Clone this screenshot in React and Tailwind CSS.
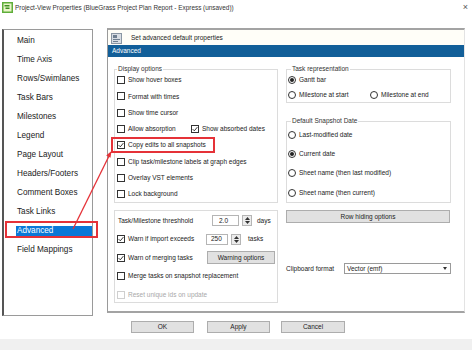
import React from 'react';

const Check = ({ on, off }) => (
  <span
    className={`w-[8px] h-[8px] border ${off ? 'border-[#cfcfcf]' : 'border-[#333]'} bg-white flex items-center justify-center shrink-0`}
  >
    {on && (
      <svg width="6" height="6" viewBox="0 0 6 6">
        <path d="M0.6 3.1 L2.3 4.8 L5.4 1.1" stroke="#222" strokeWidth="0.9" fill="none" />
      </svg>
    )}
  </span>
);

const Radio = ({ on }) => (
  <span className="w-[8px] h-[8px] rounded-full border border-[#333] bg-white flex items-center justify-center shrink-0">
    {on && <span className="w-[4px] h-[4px] rounded-full bg-[#222]" />}
  </span>
);

const Spinner = () => (
  <span className="w-[10px] h-[11px] border border-[#b5b5b5] bg-[#ececec] flex flex-col items-center justify-center gap-[1px] shrink-0">
    <svg width="5" height="3" viewBox="0 0 5 3"><path d="M0 3 L2.5 0 L5 3 Z" fill="#333" /></svg>
    <svg width="5" height="3" viewBox="0 0 5 3"><path d="M0 0 L2.5 3 L5 0 Z" fill="#333" /></svg>
  </span>
);

const CheckRow = ({ label, on, off, h = 'h-[16.3px]' }) => (
  <div className={`${h} flex items-center gap-[3px] pl-[2px]`}>
    <Check on={on} off={off} />
    <span className={off ? 'text-[#a8a8a8]' : ''}>{label}</span>
  </div>
);

const Button = ({ children, className = '' }) => (
  <div className={`h-[12px] border border-[#adadad] bg-[#e1e1e1] flex items-center justify-center text-[6.5px] ${className}`}>
    {children}
  </div>
);

const navItems = [
  'Main', 'Time Axis', 'Rows/Swimlanes', 'Task Bars', 'Milestones', 'Legend', 'Page Layout',
  'Headers/Footers', 'Comment Boxes', 'Task Links', 'Advanced', 'Field Mappings',
];

export default function App() {
  return (
    <div className="relative w-[474px] h-[351px] bg-white overflow-hidden text-[#222] font-['Liberation_Sans',Arial,sans-serif]">
      {/* title bar */}
      <div className="h-[14px] flex items-center pl-[2px] pr-[6px] pt-[1px]">
        <svg width="11" height="11" viewBox="0 0 11 11" className="shrink-0">
          <rect x="0" y="0" width="11" height="11" fill="#5fae3a" />
          <rect x="1.5" y="1.5" width="8" height="8" fill="#e9f5c8" />
          <rect x="2.5" y="3" width="5" height="1.5" fill="#3f8f22" />
          <rect x="3.5" y="5.5" width="4" height="1.5" fill="#3f8f22" />
        </svg>
        <span className="ml-[2px] text-[6.4px] text-[#333] whitespace-nowrap">
          Project-View Properties (BlueGrass Project Plan Report - Express (unsaved))
        </span>
        <span className="ml-auto text-[9px] text-[#555] leading-none">×</span>
      </div>

      {/* body */}
      <div className="flex items-start mt-[14px]">
        {/* nav list */}
        <div className="ml-[2px] mt-[1px] w-[91px] h-[287px] border border-[#9a9a9a] border-l-2 border-l-[#555] pt-[2px]">
          {navItems.map((item) => (
            <div key={item} className="h-[19px] flex items-center">
              <span
                className={`ml-[12px] flex-1 h-[11px] flex items-center pl-[1px] text-[8.2px] ${
                  item === 'Advanced' ? 'bg-[#0a78d7] text-white' : ''
                }`}
              >
                {item}
              </span>
            </div>
          ))}
        </div>

        {/* panel */}
        <div className="ml-[14px] w-[358px] h-[285px] border-t-2 border-t-[#a3a3a3] border-l border-l-[#9a9a9a] border-r border-r-[#e3e3e3] border-b-2 border-b-[#a3a3a3] flex flex-col text-[6.5px]">
          <div className="h-[15px] flex items-center pl-[3px] pt-[1px] bg-[#fffef8]">
            <svg width="11" height="11" viewBox="0 0 11 11" className="shrink-0">
              <rect x="0.5" y="0.5" width="10" height="10" fill="#d8dde3" stroke="#8a96a3" />
              <rect x="2" y="2" width="4" height="3" fill="#6f7f90" />
              <rect x="2" y="6" width="7" height="1" fill="#6f7f90" />
              <rect x="2" y="8" width="5" height="1" fill="#6f7f90" />
            </svg>
            <span className="ml-[9px]">Set advanced default properties</span>
          </div>
          <div className="h-[12px] bg-[#125f99] text-white flex items-center pl-[4px]">Advanced</div>

          <div className="flex pl-[6px] mt-[8px]">
            {/* left column */}
            <div className="w-[164px] flex flex-col">
              <fieldset className="border border-[#dcdcdc] px-0 pb-0 pt-0">
                <legend className="ml-[2px] px-[1px] leading-[8px] text-[#333]">Display options</legend>
                <div className="-mt-[1px]">
                  <CheckRow label="Show hover boxes" />
                  <CheckRow label="Format with times" />
                  <CheckRow label="Show time cursor" />
                  <div className="h-[16.3px] flex items-center pl-[2px]">
                    <div className="w-[74px] flex items-center gap-[3px]">
                      <Check />
                      <span>Allow absorption</span>
                    </div>
                    <Check on />
                    <span className="ml-[3px]">Show absorbed dates</span>
                  </div>
                  <CheckRow label="Copy edits to all snapshots" on />
                  <CheckRow label="Clip task/milestone labels at graph edges" />
                  <CheckRow label="Overlay VST elements" />
                  <CheckRow label="Lock background" />
                </div>
              </fieldset>

              <div className="mt-[7px] border border-[#dcdcdc] h-[93px]">
                <div className="h-[18.5px] flex items-center pl-[3px]">
                  <span className="w-[94px]">Task/Milestone threshhold</span>
                  <span className="w-[27px] h-[11px] border border-[#b5b5b5] flex items-center pl-[6px]">2.0</span>
                  <span className="ml-[3px]"><Spinner /></span>
                  <span className="ml-[5px]">days</span>
                </div>
                <div className="h-[18.5px] flex items-center pl-[2px] gap-[3px]">
                  <Check on />
                  <span className="w-[75px]">Warn if import exceeds</span>
                  <span className="w-[22px] h-[11px] border border-[#b5b5b5] flex items-center pl-[4px]">250</span>
                  <Spinner />
                  <span className="ml-[4px]">tasks</span>
                </div>
                <div className="h-[18.5px] flex items-center pl-[2px] gap-[3px]">
                  <Check on />
                  <span className="w-[76px]">Warn of merging tasks</span>
                  <Button className="w-[68px] h-[13px]">Warning options</Button>
                </div>
                <CheckRow label="Merge tasks on snapshot replacement" h="h-[18.5px]" />
                <CheckRow label="Reset unique ids on update" off h="h-[18.5px]" />
              </div>
            </div>

            {/* right column */}
            <div className="ml-[8px] w-[165px] flex flex-col">
              <fieldset className="border border-[#dcdcdc] p-0">
                <legend className="ml-[4px] px-[1px] leading-[8px] text-[#333]">Task representation</legend>
                <div className="-mt-[1px]">
                  <div className="h-[15px] flex items-center gap-[3px] pl-[1px]">
                    <Radio on />
                    <span>Gantt bar</span>
                  </div>
                  <div className="h-[15px] flex items-center pl-[1px]">
                    <div className="w-[82px] flex items-center gap-[3px]">
                      <Radio />
                      <span>Milestone at start</span>
                    </div>
                    <Radio />
                    <span className="ml-[3px]">Milestone at end</span>
                  </div>
                </div>
              </fieldset>

              <fieldset className="mt-[14px] border border-[#dcdcdc] p-0">
                <legend className="ml-[4px] px-[1px] leading-[8px] text-[#333]">Default Snapshot Date</legend>
                <div>
                  <div className="h-[19.3px] flex items-center gap-[3px] pl-[1px]"><Radio /><span>Last-modified date</span></div>
                  <div className="h-[19.3px] flex items-center gap-[3px] pl-[1px]"><Radio on /><span>Current date</span></div>
                  <div className="h-[19.3px] flex items-center gap-[3px] pl-[1px]"><Radio /><span>Sheet name (then last modified)</span></div>
                  <div className="h-[19.3px] flex items-center gap-[3px] pl-[1px]"><Radio /><span>Sheet name (then current)</span></div>
                </div>
              </fieldset>

              <Button className="mt-[7px] w-[164px] h-[13px]">Row hiding options</Button>

              <div className="mt-[40px] flex items-center">
                <span className="w-[58px]">Clipboard format</span>
                <div className="w-[107px] h-[11px] border border-[#9a9a9a] flex items-center pl-[2px] pr-[3px]">
                  <span>Vector (emf)</span>
                  <svg width="4" height="3" viewBox="0 0 4 3" className="ml-auto"><path d="M0 0 L4 0 L2 3 Z" fill="#333" /></svg>
                </div>
              </div>
            </div>
          </div>
        </div>
      </div>

      {/* dialog buttons */}
      <div className="flex mt-[5px] pl-[131px]">
        <Button className="w-[63px] border-[#0078d7]">OK</Button>
        <Button className="ml-[13px] w-[63px]">Apply</Button>
        <Button className="ml-[11px] w-[64px]">Cancel</Button>
      </div>
      <div className="mt-[6px] w-[472px] h-[11px] bg-[#f0f0f0]" />

      {/* red annotations */}
      <div className="absolute left-[5px] top-[221px] w-[93px] h-[17px] border-2 border-[#e53238]" />
      <div className="absolute left-[111px] top-[137px] w-[104px] h-[16px] border-2 border-[#e53238]" />
      <svg className="absolute left-0 top-0 pointer-events-none" width="474" height="351">
        <line x1="73" y1="229" x2="109" y2="156" stroke="#e53238" strokeWidth="1.3" />
        <path d="M111.5 151 L106.2 155.6 L110.5 157.7 Z" fill="#e53238" />
      </svg>
    </div>
  );
}
